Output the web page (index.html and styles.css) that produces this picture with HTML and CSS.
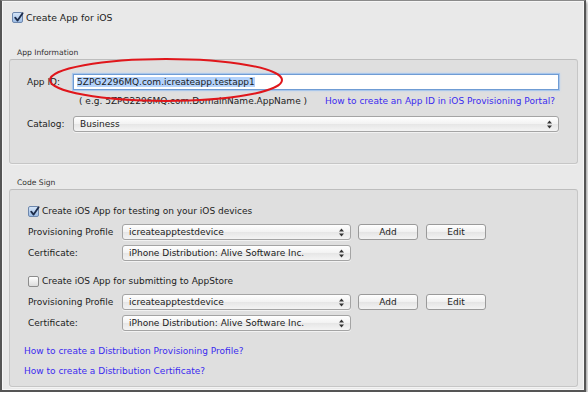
FILE: index.html
```html
<!DOCTYPE html>
<html lang="en">
<head>
    <meta charset="UTF-8">
    <title>Create App for iOS</title>
    <link rel="stylesheet" href="styles.css">
</head>
<body>
    <div class="window">
        <div class="row top-check">
            <span class="checkbox checked">
                <svg width="11" height="11" viewBox="0 0 11 11"><path d="M2.2 5.6 L4.6 8.6 L9.6 1.2" fill="none" stroke="#1d2c4a" stroke-width="1.8" stroke-linecap="round" stroke-linejoin="round"/></svg>
            </span>
            <span>Create App for iOS</span>
        </div>

        <div class="group-title first">App Information</div>
        <div class="group info">
            <div class="row">
                <span class="label wide">App ID:</span>
                <div class="textfield"><span class="selected">5ZPG2296MQ.com.icreateapp.testapp1</span></div>
            </div>
            <div class="row hint">
                <span class="example">( e.g. 5ZPG2296MQ.com.DomainName.AppName )</span>
                <a class="link">How to create an App ID in iOS Provisioning Portal?</a>
            </div>
            <div class="row catalog">
                <span class="label wide">Catalog:</span>
                <div class="popup full">
                    <span>Business</span>
                    <svg class="arrows" width="5" height="9" viewBox="0 0 5 9"><path d="M0 3.5 L2.5 0.5 L5 3.5 Z M0 5.5 L2.5 8.5 L5 5.5 Z" fill="#333"/></svg>
                </div>
            </div>
        </div>

        <div class="group-title">Code Sign</div>
        <div class="group sign">
            <div class="row check-row">
                <span class="checkbox checked">
                    <svg width="11" height="11" viewBox="0 0 11 11"><path d="M2.2 5.6 L4.6 8.6 L9.6 1.2" fill="none" stroke="#1d2c4a" stroke-width="1.8" stroke-linecap="round" stroke-linejoin="round"/></svg>
                </span>
                <span>Create iOS App for testing on your iOS devices</span>
            </div>
            <div class="row field-row">
                <span class="label">Provisioning Profile</span>
                <div class="popup">
                    <span>icreateapptestdevice</span>
                    <svg class="arrows" width="5" height="9" viewBox="0 0 5 9"><path d="M0 3.5 L2.5 0.5 L5 3.5 Z M0 5.5 L2.5 8.5 L5 5.5 Z" fill="#333"/></svg>
                </div>
                <button class="btn add">Add</button>
                <button class="btn">Edit</button>
            </div>
            <div class="row field-row cert">
                <span class="label">Certificate:</span>
                <div class="popup">
                    <span>iPhone Distribution: Alive Software Inc.</span>
                    <svg class="arrows" width="5" height="9" viewBox="0 0 5 9"><path d="M0 3.5 L2.5 0.5 L5 3.5 Z M0 5.5 L2.5 8.5 L5 5.5 Z" fill="#333"/></svg>
                </div>
            </div>

            <div class="row check-row second">
                <span class="checkbox"></span>
                <span>Create iOS App for submitting to AppStore</span>
            </div>
            <div class="row field-row">
                <span class="label">Provisioning Profile</span>
                <div class="popup">
                    <span>icreateapptestdevice</span>
                    <svg class="arrows" width="5" height="9" viewBox="0 0 5 9"><path d="M0 3.5 L2.5 0.5 L5 3.5 Z M0 5.5 L2.5 8.5 L5 5.5 Z" fill="#333"/></svg>
                </div>
                <button class="btn add">Add</button>
                <button class="btn">Edit</button>
            </div>
            <div class="row field-row cert">
                <span class="label">Certificate:</span>
                <div class="popup">
                    <span>iPhone Distribution: Alive Software Inc.</span>
                    <svg class="arrows" width="5" height="9" viewBox="0 0 5 9"><path d="M0 3.5 L2.5 0.5 L5 3.5 Z M0 5.5 L2.5 8.5 L5 5.5 Z" fill="#333"/></svg>
                </div>
            </div>

            <a class="link block first-link">How to create a Distribution Provisioning Profile?</a>
            <a class="link block">How to create a Distribution Certificate?</a>
        </div>

        <!-- red annotation circle around the App ID -->
        <svg class="annotation" width="240" height="48" viewBox="0 0 240 48">
            <ellipse cx="118" cy="23" rx="116" ry="21" fill="none" stroke="#e0161b" stroke-width="2"/>
        </svg>
    </div>
</body>
</html>
```

FILE: styles.css
```css
body {
    margin: 0;
    padding: 0;
    background-color: #ffffff;
    font-family: "DejaVu Sans", sans-serif;
    font-size: 9px;
    color: #1c1c1c;
}

.window {
    position: relative;
    width: 586px;
    height: 392px;
    box-sizing: border-box;
    background-color: #e9e9e9;
    border: 2px solid #555555;
    border-top: 1px solid #8a8a8a;
    box-shadow: 1px 2px 3px rgba(0, 0, 0, 0.45), inset 1px 1px 0 #f6f6f6, inset -1px -1px 0 #f6f6f6;
    padding: 0 6px 0 7px;
}

.row {
    display: flex;
    align-items: center;
}

.top-check {
    height: 13px;
    margin-top: 10px;
    padding-left: 3px;
    font-size: 9.3px;
}

.checkbox {
    width: 11px;
    height: 11px;
    box-sizing: border-box;
    border: 1px solid #8c8c8c;
    border-radius: 2px;
    background: linear-gradient(#ffffff, #dcdcdc);
    margin-right: 3px;
    position: relative;
    flex-shrink: 0;
}

.checkbox.checked {
    background: linear-gradient(#d4e4f7, #9dbde6);
    border-color: #6d87ad;
}

.checkbox svg {
    position: absolute;
    left: 0;
    top: -1px;
}

.group-title {
    font-size: 7.6px;
    color: #333333;
    line-height: 10px;
    height: 10px;
    padding-left: 8px;
    margin-top: 14px;
    margin-bottom: 1px;
}

.group-title.first {
    margin-top: 24px;
}

.group {
    background-color: #dfdfdf;
    border: 1px solid #c6c6c6;
    border-top-color: #bdbdbd;
    border-radius: 3px;
    box-shadow: 0 1px 0 #f3f3f3;
}

.info {
    padding: 14px 18px 31px 17px;
}

.label {
    width: 94px;
    flex-shrink: 0;
}

.label.wide {
    width: 46px;
}

.textfield {
    flex: 1;
    height: 16px;
    box-sizing: border-box;
    background-color: #ffffff;
    border: 1px solid #6f9cd4;
    box-shadow: 0 0 0 1px #a9c6ea, 0 0 2px 1px #c2d7f0;
    padding: 1px 3px;
    line-height: 12px;
}

.selected {
    background-color: #b3d2fb;
}

.hint {
    height: 14px;
    margin-top: 4px;
    padding-left: 52px;
}

.example {
    width: 246px;
}

.link {
    color: #3b2bef;
    text-decoration: none;
    cursor: pointer;
}

.catalog {
    margin-top: 8px;
}

.popup {
    display: flex;
    align-items: center;
    justify-content: space-between;
    width: 229px;
    height: 16px;
    box-sizing: border-box;
    border: 1px solid #a4a4a4;
    border-radius: 3px;
    background: linear-gradient(#ffffff, #f2f2f2 50%, #e6e6e6 51%, #f4f4f4);
    padding: 0 6px 0 6px;
    box-shadow: 0 1px 0 rgba(255, 255, 255, 0.6);
}

.popup.full {
    flex: 1;
    width: auto;
}

.sign {
    padding: 14px 14px 8px 14px;
}

.check-row {
    height: 14px;
    padding-left: 4px;
}

.check-row.second {
    margin-top: 13px;
}

.field-row {
    height: 16px;
    margin-top: 6px;
    padding-left: 4px;
}

.field-row.cert {
    margin-top: 5px;
}

.btn {
    width: 60px;
    height: 16px;
    margin-left: 8px;
    padding: 0;
    font-family: "DejaVu Sans", sans-serif;
    font-size: 9px;
    color: #1c1c1c;
    border: 1px solid #9a9a9a;
    border-radius: 3px;
    background: linear-gradient(#ffffff, #f0f0f0 50%, #e4e4e4 51%, #f3f3f3);
}

.btn.add {
    margin-left: 7px;
}

.link.block {
    display: block;
    height: 14px;
    line-height: 14px;
    margin-top: 6px;
}

.link.first-link {
    margin-top: 13px;
}

.annotation {
    position: absolute;
    left: 46px;
    top: 56px;
}
```
